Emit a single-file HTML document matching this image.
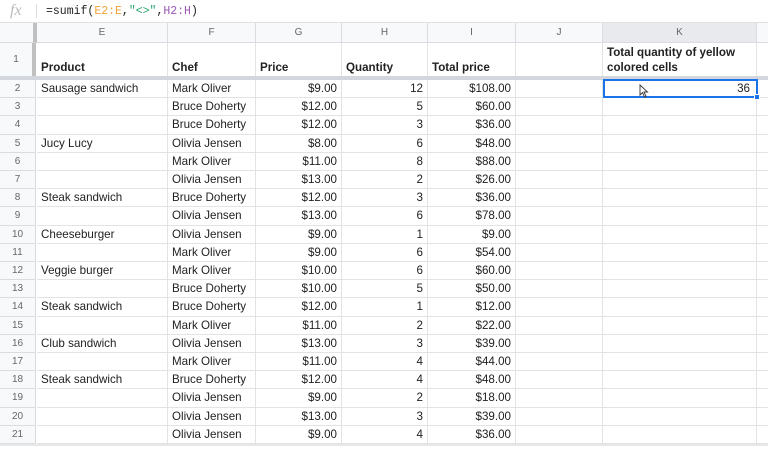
<!DOCTYPE html>
<html><head><meta charset="utf-8"><style>
*{margin:0;padding:0;box-sizing:border-box}
body{width:768px;height:449px;overflow:hidden;background:#fff;font-family:"Liberation Sans",Arial,sans-serif;position:relative;font-size:11.6px;color:#222}
.fb{position:absolute;left:0;top:0;width:768px;height:23px;border-bottom:1px solid #e0e0e0;background:#fff}
.fx{position:absolute;left:10px;top:2px;font-family:"Liberation Serif",serif;font-style:italic;color:#bbb;font-size:16px}
.fsep{position:absolute;left:36px;top:4px;width:1px;height:14px;background:#ddd}
.ftx{position:absolute;left:46px;top:5px;font-family:"Liberation Mono",monospace;font-size:11.5px;color:#222}
.hdr{position:absolute;top:23px;height:20px;background:#f8f9fa;border-right:1px solid #dadce0;border-bottom:1px solid #dadce0;color:#666;font-size:10px;text-align:center;line-height:20px}
.c{position:absolute;border-right:1px solid #e2e3e3;border-bottom:1px solid #e2e3e3;white-space:nowrap;overflow:hidden;padding:0 4px;line-height:18px;height:18.2px}
.rn{position:absolute;left:0;width:36px;background:#f8f9fa;border-right:1px solid #dadce0;border-bottom:1px solid #dadce0;color:#666;font-size:10px;text-align:center;line-height:18px;height:18.2px}
.r{text-align:right}
b{font-weight:bold}
</style></head><body>
<div class="fb"><span class="fx">fx</span><div class="fsep"></div><div class="ftx">=sumif(<span style="color:#f1a33a">E2:E</span>,<span style="color:#2aa36b">"&lt;&gt;"</span>,<span style="color:#9b59b6">H2:H</span>)</div></div>
<div class="hdr" style="left:0;width:37px;border-right:4px solid #c0c0c0"></div>
<div class="hdr" style="left:37px;width:131px">E</div>
<div class="hdr" style="left:168px;width:88px">F</div>
<div class="hdr" style="left:256px;width:86px">G</div>
<div class="hdr" style="left:342px;width:86px">H</div>
<div class="hdr" style="left:428px;width:88px">I</div>
<div class="hdr" style="left:516px;width:87px">J</div>
<div class="hdr" style="left:603px;width:154px;background:#e8eaed">K</div>
<div class="hdr" style="left:757px;width:20px"></div>
<div class="rn" style="top:43px;height:34px;line-height:34px;border-right:4px solid #c0c0c0">1</div>
<div class="c" style="left:37px;top:43px;width:131px;height:34px;padding-top:16px"><b>Product</b></div>
<div class="c" style="left:168px;top:43px;width:88px;height:34px;padding-top:16px"><b>Chef</b></div>
<div class="c" style="left:256px;top:43px;width:86px;height:34px;padding-top:16px"><b>Price</b></div>
<div class="c" style="left:342px;top:43px;width:86px;height:34px;padding-top:16px"><b>Quantity</b></div>
<div class="c" style="left:428px;top:43px;width:88px;height:34px;padding-top:16px"><b>Total price</b></div>
<div class="c" style="left:516px;top:43px;width:87px;height:34px"></div>
<div class="c" style="left:603px;top:43px;width:154px;height:34px;white-space:normal;line-height:15px;padding-top:2px"><b>Total quantity of yellow colored cells</b></div>
<div class="c" style="left:757px;top:43px;width:20px;height:34px"></div>
<div style="position:absolute;left:0;top:76px;width:768px;height:4px;background:#d3d6dc"></div>

<div class="rn" style="top:80px">2</div><div class="c" style="left:37px;top:80px;width:131px">Sausage sandwich</div><div class="c" style="left:168px;top:80px;width:88px">Mark Oliver</div><div class="c r" style="left:256px;top:80px;width:86px">$9.00</div><div class="c r" style="left:342px;top:80px;width:86px">12</div><div class="c r" style="left:428px;top:80px;width:88px">$108.00</div><div class="c" style="left:516px;top:80px;width:87px"></div><div class="c r" style="left:603px;top:80px;width:154px;padding-right:6px">36</div><div class="c" style="left:757px;top:80px;width:20px"></div>
<div class="rn" style="top:98.2px">3</div><div class="c" style="left:37px;top:98.2px;width:131px"></div><div class="c" style="left:168px;top:98.2px;width:88px">Bruce Doherty</div><div class="c r" style="left:256px;top:98.2px;width:86px">$12.00</div><div class="c r" style="left:342px;top:98.2px;width:86px">5</div><div class="c r" style="left:428px;top:98.2px;width:88px">$60.00</div><div class="c" style="left:516px;top:98.2px;width:87px"></div><div class="c" style="left:603px;top:98.2px;width:154px"></div><div class="c" style="left:757px;top:98.2px;width:20px"></div>
<div class="rn" style="top:116.4px">4</div><div class="c" style="left:37px;top:116.4px;width:131px"></div><div class="c" style="left:168px;top:116.4px;width:88px">Bruce Doherty</div><div class="c r" style="left:256px;top:116.4px;width:86px">$12.00</div><div class="c r" style="left:342px;top:116.4px;width:86px">3</div><div class="c r" style="left:428px;top:116.4px;width:88px">$36.00</div><div class="c" style="left:516px;top:116.4px;width:87px"></div><div class="c" style="left:603px;top:116.4px;width:154px"></div><div class="c" style="left:757px;top:116.4px;width:20px"></div>
<div class="rn" style="top:134.6px">5</div><div class="c" style="left:37px;top:134.6px;width:131px">Jucy Lucy</div><div class="c" style="left:168px;top:134.6px;width:88px">Olivia Jensen</div><div class="c r" style="left:256px;top:134.6px;width:86px">$8.00</div><div class="c r" style="left:342px;top:134.6px;width:86px">6</div><div class="c r" style="left:428px;top:134.6px;width:88px">$48.00</div><div class="c" style="left:516px;top:134.6px;width:87px"></div><div class="c" style="left:603px;top:134.6px;width:154px"></div><div class="c" style="left:757px;top:134.6px;width:20px"></div>
<div class="rn" style="top:152.8px">6</div><div class="c" style="left:37px;top:152.8px;width:131px"></div><div class="c" style="left:168px;top:152.8px;width:88px">Mark Oliver</div><div class="c r" style="left:256px;top:152.8px;width:86px">$11.00</div><div class="c r" style="left:342px;top:152.8px;width:86px">8</div><div class="c r" style="left:428px;top:152.8px;width:88px">$88.00</div><div class="c" style="left:516px;top:152.8px;width:87px"></div><div class="c" style="left:603px;top:152.8px;width:154px"></div><div class="c" style="left:757px;top:152.8px;width:20px"></div>
<div class="rn" style="top:171px">7</div><div class="c" style="left:37px;top:171px;width:131px"></div><div class="c" style="left:168px;top:171px;width:88px">Olivia Jensen</div><div class="c r" style="left:256px;top:171px;width:86px">$13.00</div><div class="c r" style="left:342px;top:171px;width:86px">2</div><div class="c r" style="left:428px;top:171px;width:88px">$26.00</div><div class="c" style="left:516px;top:171px;width:87px"></div><div class="c" style="left:603px;top:171px;width:154px"></div><div class="c" style="left:757px;top:171px;width:20px"></div>
<div class="rn" style="top:189.2px">8</div><div class="c" style="left:37px;top:189.2px;width:131px">Steak sandwich</div><div class="c" style="left:168px;top:189.2px;width:88px">Bruce Doherty</div><div class="c r" style="left:256px;top:189.2px;width:86px">$12.00</div><div class="c r" style="left:342px;top:189.2px;width:86px">3</div><div class="c r" style="left:428px;top:189.2px;width:88px">$36.00</div><div class="c" style="left:516px;top:189.2px;width:87px"></div><div class="c" style="left:603px;top:189.2px;width:154px"></div><div class="c" style="left:757px;top:189.2px;width:20px"></div>
<div class="rn" style="top:207.4px">9</div><div class="c" style="left:37px;top:207.4px;width:131px"></div><div class="c" style="left:168px;top:207.4px;width:88px">Olivia Jensen</div><div class="c r" style="left:256px;top:207.4px;width:86px">$13.00</div><div class="c r" style="left:342px;top:207.4px;width:86px">6</div><div class="c r" style="left:428px;top:207.4px;width:88px">$78.00</div><div class="c" style="left:516px;top:207.4px;width:87px"></div><div class="c" style="left:603px;top:207.4px;width:154px"></div><div class="c" style="left:757px;top:207.4px;width:20px"></div>
<div class="rn" style="top:225.6px">10</div><div class="c" style="left:37px;top:225.6px;width:131px">Cheeseburger</div><div class="c" style="left:168px;top:225.6px;width:88px">Olivia Jensen</div><div class="c r" style="left:256px;top:225.6px;width:86px">$9.00</div><div class="c r" style="left:342px;top:225.6px;width:86px">1</div><div class="c r" style="left:428px;top:225.6px;width:88px">$9.00</div><div class="c" style="left:516px;top:225.6px;width:87px"></div><div class="c" style="left:603px;top:225.6px;width:154px"></div><div class="c" style="left:757px;top:225.6px;width:20px"></div>
<div class="rn" style="top:243.8px">11</div><div class="c" style="left:37px;top:243.8px;width:131px"></div><div class="c" style="left:168px;top:243.8px;width:88px">Mark Oliver</div><div class="c r" style="left:256px;top:243.8px;width:86px">$9.00</div><div class="c r" style="left:342px;top:243.8px;width:86px">6</div><div class="c r" style="left:428px;top:243.8px;width:88px">$54.00</div><div class="c" style="left:516px;top:243.8px;width:87px"></div><div class="c" style="left:603px;top:243.8px;width:154px"></div><div class="c" style="left:757px;top:243.8px;width:20px"></div>
<div class="rn" style="top:262px">12</div><div class="c" style="left:37px;top:262px;width:131px">Veggie burger</div><div class="c" style="left:168px;top:262px;width:88px">Mark Oliver</div><div class="c r" style="left:256px;top:262px;width:86px">$10.00</div><div class="c r" style="left:342px;top:262px;width:86px">6</div><div class="c r" style="left:428px;top:262px;width:88px">$60.00</div><div class="c" style="left:516px;top:262px;width:87px"></div><div class="c" style="left:603px;top:262px;width:154px"></div><div class="c" style="left:757px;top:262px;width:20px"></div>
<div class="rn" style="top:280.2px">13</div><div class="c" style="left:37px;top:280.2px;width:131px"></div><div class="c" style="left:168px;top:280.2px;width:88px">Bruce Doherty</div><div class="c r" style="left:256px;top:280.2px;width:86px">$10.00</div><div class="c r" style="left:342px;top:280.2px;width:86px">5</div><div class="c r" style="left:428px;top:280.2px;width:88px">$50.00</div><div class="c" style="left:516px;top:280.2px;width:87px"></div><div class="c" style="left:603px;top:280.2px;width:154px"></div><div class="c" style="left:757px;top:280.2px;width:20px"></div>
<div class="rn" style="top:298.4px">14</div><div class="c" style="left:37px;top:298.4px;width:131px">Steak sandwich</div><div class="c" style="left:168px;top:298.4px;width:88px">Bruce Doherty</div><div class="c r" style="left:256px;top:298.4px;width:86px">$12.00</div><div class="c r" style="left:342px;top:298.4px;width:86px">1</div><div class="c r" style="left:428px;top:298.4px;width:88px">$12.00</div><div class="c" style="left:516px;top:298.4px;width:87px"></div><div class="c" style="left:603px;top:298.4px;width:154px"></div><div class="c" style="left:757px;top:298.4px;width:20px"></div>
<div class="rn" style="top:316.6px">15</div><div class="c" style="left:37px;top:316.6px;width:131px"></div><div class="c" style="left:168px;top:316.6px;width:88px">Mark Oliver</div><div class="c r" style="left:256px;top:316.6px;width:86px">$11.00</div><div class="c r" style="left:342px;top:316.6px;width:86px">2</div><div class="c r" style="left:428px;top:316.6px;width:88px">$22.00</div><div class="c" style="left:516px;top:316.6px;width:87px"></div><div class="c" style="left:603px;top:316.6px;width:154px"></div><div class="c" style="left:757px;top:316.6px;width:20px"></div>
<div class="rn" style="top:334.8px">16</div><div class="c" style="left:37px;top:334.8px;width:131px">Club sandwich</div><div class="c" style="left:168px;top:334.8px;width:88px">Olivia Jensen</div><div class="c r" style="left:256px;top:334.8px;width:86px">$13.00</div><div class="c r" style="left:342px;top:334.8px;width:86px">3</div><div class="c r" style="left:428px;top:334.8px;width:88px">$39.00</div><div class="c" style="left:516px;top:334.8px;width:87px"></div><div class="c" style="left:603px;top:334.8px;width:154px"></div><div class="c" style="left:757px;top:334.8px;width:20px"></div>
<div class="rn" style="top:353px">17</div><div class="c" style="left:37px;top:353px;width:131px"></div><div class="c" style="left:168px;top:353px;width:88px">Mark Oliver</div><div class="c r" style="left:256px;top:353px;width:86px">$11.00</div><div class="c r" style="left:342px;top:353px;width:86px">4</div><div class="c r" style="left:428px;top:353px;width:88px">$44.00</div><div class="c" style="left:516px;top:353px;width:87px"></div><div class="c" style="left:603px;top:353px;width:154px"></div><div class="c" style="left:757px;top:353px;width:20px"></div>
<div class="rn" style="top:371.2px">18</div><div class="c" style="left:37px;top:371.2px;width:131px">Steak sandwich</div><div class="c" style="left:168px;top:371.2px;width:88px">Bruce Doherty</div><div class="c r" style="left:256px;top:371.2px;width:86px">$12.00</div><div class="c r" style="left:342px;top:371.2px;width:86px">4</div><div class="c r" style="left:428px;top:371.2px;width:88px">$48.00</div><div class="c" style="left:516px;top:371.2px;width:87px"></div><div class="c" style="left:603px;top:371.2px;width:154px"></div><div class="c" style="left:757px;top:371.2px;width:20px"></div>
<div class="rn" style="top:389.4px">19</div><div class="c" style="left:37px;top:389.4px;width:131px"></div><div class="c" style="left:168px;top:389.4px;width:88px">Olivia Jensen</div><div class="c r" style="left:256px;top:389.4px;width:86px">$9.00</div><div class="c r" style="left:342px;top:389.4px;width:86px">2</div><div class="c r" style="left:428px;top:389.4px;width:88px">$18.00</div><div class="c" style="left:516px;top:389.4px;width:87px"></div><div class="c" style="left:603px;top:389.4px;width:154px"></div><div class="c" style="left:757px;top:389.4px;width:20px"></div>
<div class="rn" style="top:407.6px">20</div><div class="c" style="left:37px;top:407.6px;width:131px"></div><div class="c" style="left:168px;top:407.6px;width:88px">Olivia Jensen</div><div class="c r" style="left:256px;top:407.6px;width:86px">$13.00</div><div class="c r" style="left:342px;top:407.6px;width:86px">3</div><div class="c r" style="left:428px;top:407.6px;width:88px">$39.00</div><div class="c" style="left:516px;top:407.6px;width:87px"></div><div class="c" style="left:603px;top:407.6px;width:154px"></div><div class="c" style="left:757px;top:407.6px;width:20px"></div>
<div class="rn" style="top:425.8px">21</div><div class="c" style="left:37px;top:425.8px;width:131px"></div><div class="c" style="left:168px;top:425.8px;width:88px">Olivia Jensen</div><div class="c r" style="left:256px;top:425.8px;width:86px">$9.00</div><div class="c r" style="left:342px;top:425.8px;width:86px">4</div><div class="c r" style="left:428px;top:425.8px;width:88px">$36.00</div><div class="c" style="left:516px;top:425.8px;width:87px"></div><div class="c" style="left:603px;top:425.8px;width:154px"></div><div class="c" style="left:757px;top:425.8px;width:20px"></div>

<div style="position:absolute;left:0;top:443.5px;width:768px;height:2px;background:#e8e8e8"></div>
<div style="position:absolute;left:603px;top:79px;width:155px;height:19px;border:2px solid #1a73e8"></div>
<div style="position:absolute;left:754px;top:94px;width:6px;height:6px;background:#1a73e8;border:1px solid #fff"></div>
<svg style="position:absolute;left:639px;top:84px" width="10" height="14" viewBox="0 0 10 14"><path d="M1 1 L1 11 L3.5 8.5 L5.5 13 L7 12.3 L5 8 L8.5 8 Z" fill="#fff" stroke="#333" stroke-width="0.9"/></svg>
</body></html>
